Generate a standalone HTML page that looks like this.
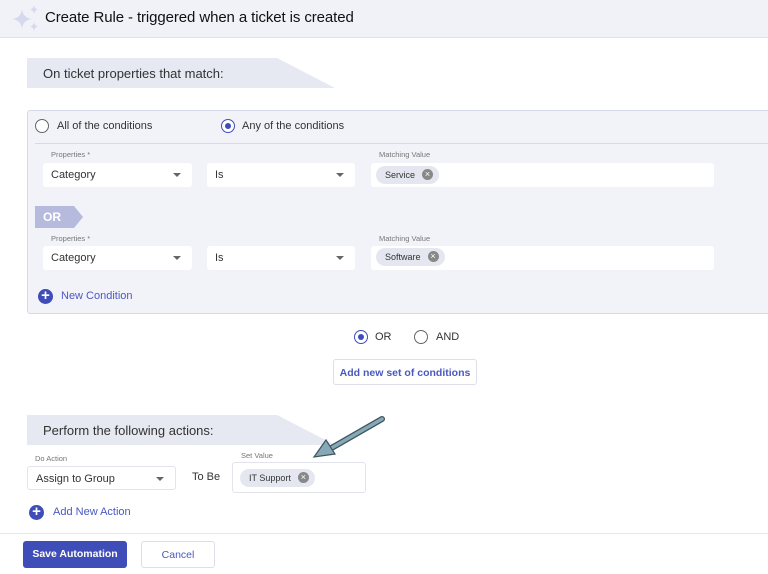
<!DOCTYPE html>
<html><head><meta charset="utf-8"><style>
*{margin:0;padding:0;box-sizing:border-box}
body{width:768px;height:574px;overflow:hidden;background:#fff;font-family:"Liberation Sans",sans-serif;color:#333;position:relative}
.a{position:absolute}
.hdr{left:0;top:0;width:768px;height:38px;background:#f1f2f8;border-bottom:1px solid #dfe1ec}
.title{left:45px;top:9px;font-size:15px;color:#111;font-weight:normal;letter-spacing:-0.1px}
.ban{height:30px;background:#e6e8f2;clip-path:polygon(0 0,250px 0,308px 100%,0 100%);width:308px;font-size:13px;color:#333;padding:8px 0 0 16px}
.box{left:27px;top:110px;width:745px;height:204px;background:#f2f3f9;border:1px solid #d6d9e8;border-radius:3px}
.sel{background:#fff;border-radius:3px;height:24px;font-size:11px;padding:6px 0 0 8px;color:#333}
.sel.dd::after{content:"";position:absolute;right:11px;top:10px;border:4px solid transparent;border-top:4px solid #666;border-bottom:0}
.lbl{font-size:7.5px;color:#777}
.chip{background:#e5e7f0;border-radius:10px;height:18px;font-size:9px;padding:4px 24px 0 9px;color:#333}
.x{position:absolute;right:6px;top:3px;width:11px;height:11px;border-radius:50%;background:#888;color:#fff;font-size:9px;line-height:11px;text-align:center}
.rad{width:14px;height:14px;border-radius:50%;border:1.5px solid #666;background:#fff}
.rad.on{border-color:#3f4db8}
.rad.on::after{content:"";position:absolute;left:2.5px;top:2.5px;width:6px;height:6px;border-radius:50%;background:#3f4db8}
.t{font-size:11px;color:#333}
.plus{width:15px;height:15px;border-radius:50%;background:#3f4db8;color:#fff;font-size:15px;line-height:14px;text-align:center;font-weight:bold}
.link{font-size:11px;color:#4a58c0}
</style></head><body>
<div class="a hdr"></div>
<svg class="a" style="left:10px;top:3px" width="30" height="30" viewBox="0 0 30 30"><path d="M12 6 Q13 15 22 16 Q13 17 12 26 Q11 17 2 16 Q11 15 12 6Z" fill="#d6d9ee"/><path d="M24 2 Q24.6 6 28 6.5 Q24.6 7 24 11 Q23.4 7 20 6.5 Q23.4 6 24 2Z" fill="#d6d9ee"/><path d="M24 19 Q24.6 23 28 23.5 Q24.6 24 24 28 Q23.4 24 20 23.5 Q23.4 23 24 19Z" fill="#d6d9ee"/></svg>
<div class="a title">Create Rule - triggered when a ticket is created</div>
<div class="a ban" style="left:27px;top:58px">On ticket properties that match:</div>
<div class="a box"></div>
<div class="a" style="left:35px;top:143px;width:733px;height:1px;background:#d6d9ee"></div>
<div class="a rad" style="left:35px;top:119px"></div><div class="a t" style="left:57px;top:120px">All of the conditions</div>
<div class="a rad on" style="left:221px;top:119px"></div><div class="a t" style="left:242px;top:120px">Any of the conditions</div>

<div class="a lbl" style="left:51px;top:150px">Properties *</div>
<div class="a sel dd" style="left:43px;top:163px;width:149px">Category</div>
<div class="a sel dd" style="left:207px;top:163px;width:148px">Is</div>
<div class="a lbl" style="left:379px;top:150px">Matching Value</div>
<div class="a sel" style="left:371px;top:163px;width:343px"></div>
<div class="a chip" style="left:376px;top:166px">Service<span class="x">×</span></div>

<div class="a" style="left:35px;top:206px;width:48px;height:22px;background:#b6bbde;clip-path:polygon(0 0,39px 0,48px 50%,39px 100%,0 100%);color:#fff;font-size:12px;font-weight:bold;padding:4px 0 0 8px">OR</div>
<div class="a lbl" style="left:51px;top:234px">Properties *</div>
<div class="a sel dd" style="left:43px;top:246px;width:149px">Category</div>
<div class="a sel dd" style="left:207px;top:246px;width:148px">Is</div>
<div class="a lbl" style="left:379px;top:234px">Matching Value</div>
<div class="a sel" style="left:371px;top:246px;width:343px"></div>
<div class="a chip" style="left:376px;top:248px">Software<span class="x">×</span></div>

<div class="a plus" style="left:38px;top:289px">+</div>
<div class="a link" style="left:61px;top:290px">New Condition</div>

<div class="a rad on" style="left:354px;top:330px"></div><div class="a t" style="left:375px;top:331px">OR</div>
<div class="a rad" style="left:414px;top:330px"></div><div class="a t" style="left:436px;top:331px">AND</div>
<div class="a" style="left:333px;top:359px;width:144px;height:26px;border:1px solid #dcdfe8;border-radius:3px;background:#fff;font-size:10.5px;font-weight:bold;color:#4a58c0;text-align:center;padding-top:7px">Add new set of conditions</div>

<div class="a ban" style="left:27px;top:415px">Perform the following actions:</div>
<div class="a lbl" style="left:35px;top:454px">Do Action</div>
<div class="a sel dd" style="left:27px;top:466px;width:149px;border:1px solid #e2e4ec;height:24px">Assign to Group</div>
<div class="a t" style="left:192px;top:471px">To Be</div>
<div class="a lbl" style="left:241px;top:451px">Set Value</div>
<div class="a" style="left:232px;top:462px;width:134px;height:31px;border:1px solid #e2e4ec;border-radius:3px"></div>
<div class="a chip" style="left:240px;top:469px">IT Support<span class="x">×</span></div>
<svg class="a" style="left:300px;top:410px" width="95" height="55" viewBox="0 0 95 55"><line x1="82" y1="9" x2="28" y2="40" stroke="#3d5560" stroke-width="6" stroke-linecap="round"/><line x1="82" y1="9" x2="28" y2="40" stroke="#86a9b5" stroke-width="3.5" stroke-linecap="round"/><path d="M14 47 L26 30 L35 44Z" fill="#86a9b5" stroke="#3d5560" stroke-width="1.2"/></svg>
<div class="a plus" style="left:29px;top:505px">+</div>
<div class="a link" style="left:53px;top:506px">Add New Action</div>

<div class="a" style="left:0;top:533px;width:768px;height:1px;background:#e6e7ee"></div>
<div class="a" style="left:23px;top:541px;width:104px;height:27px;background:#3f4db8;border-radius:3px;color:#fff;font-size:10.5px;font-weight:bold;text-align:center;padding-top:7px">Save Automation</div>
<div class="a" style="left:141px;top:541px;width:74px;height:27px;border:1px solid #dcdfe8;border-radius:3px;color:#4a58c0;font-size:10.5px;text-align:center;padding-top:7px">Cancel</div>
</body></html>
